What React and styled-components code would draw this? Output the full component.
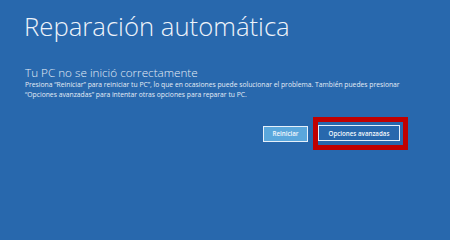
import React from "react";
import styled, { createGlobalStyle } from "styled-components";

const GlobalStyle = createGlobalStyle`
  html, body {
    margin: 0;
    padding: 0;
    background: #2868ad;
  }
  body {
    font-family: "Open Sans", "Noto Sans", sans-serif;
  }
`;

const Screen = styled.div`
  width: 450px;
  height: 240px;
  box-sizing: border-box;
  background: #2868ad;
  color: #ffffff;
  padding: 14px 0 0 24px;
  overflow: hidden;
`;

const Title = styled.h1`
  margin: 0;
  font-size: 25.7px;
  line-height: 25px;
  font-weight: 300;
  color: #eef3fa;
`;

const Subtitle = styled.h2`
  margin: 27px 0 0 1px;
  font-size: 11.7px;
  line-height: 13px;
  font-weight: 300;
  color: #e4ecf6;
`;

const Body = styled.p`
  margin: 1px 0 0 1px;
  font-size: 6.75px;
  line-height: 10px;
  font-weight: 400;
  color: #e4ecf6;
  width: 410px;
`;

const Actions = styled.div`
  display: flex;
  justify-content: flex-end;
  align-items: center;
  gap: 5px;
  margin-top: 17px;
  padding-right: 42px;
`;

const Button = styled.button`
  box-sizing: border-box;
  height: 16px;
  padding: 0;
  width: ${(p) => p.$w}px;
  border: 1px solid #e6f0fa;
  background: ${(p) => (p.$primary ? "#5aa7dc" : "#2868ad")};
  color: #f4f8fc;
  font-family: "Open Sans", "Noto Sans", sans-serif;
  font-size: 6.2px;
  font-weight: 600;
  cursor: pointer;
`;

const Highlight = styled.div`
  display: flex;
  border: 5px solid #c00000;
  padding: 3px 3px 4px 0;
`;

export default function App() {
  return (
    <>
      <GlobalStyle />
      <Screen>
        <Title>Reparación automática</Title>
        <Subtitle>Tu PC no se inició correctamente</Subtitle>
        <Body>
          Presiona “Reiniciar” para reiniciar tu PC”, lo que en ocasiones puede
          solucionar el problema. También puedes presionar
          <br />
          “Opciones avanzadas” para intentar otras opciones para reparar tu PC.
        </Body>
        <Actions>
          <Button $primary $w={45}>Reiniciar</Button>
          <Highlight>
            <Button $w={82}>Opciones avanzadas</Button>
          </Highlight>
        </Actions>
      </Screen>
    </>
  );
}
